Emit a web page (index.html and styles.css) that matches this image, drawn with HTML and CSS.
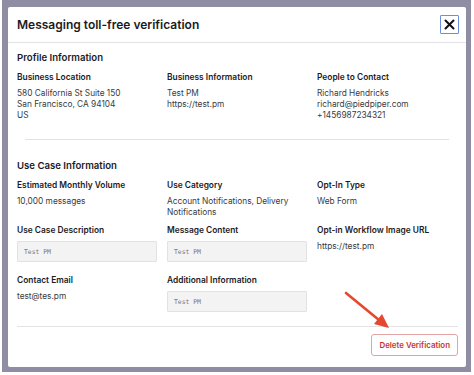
FILE: index.html
```html
<!DOCTYPE html>
<html lang="en">
<head>
  <meta charset="UTF-8" />
  <title>Messaging toll-free verification</title>
  <link rel="stylesheet" href="styles.css">
</head>
<body>
  <div class="overlay">
    <div class="modal">
      <div class="modal-header">
        <h1>Messaging toll-free verification</h1>
        <button class="close-btn" aria-label="Close">
          <svg width="11" height="11" viewBox="0 0 11 11"><path d="M1.5 1.5 L9.5 9.5 M9.5 1.5 L1.5 9.5" stroke="#111" stroke-width="2" stroke-linecap="round"/></svg>
        </button>
      </div>

      <div class="modal-body">
        <h2>Profile Information</h2>
        <div class="grid">
          <div class="field">
            <h3>Business Location</h3>
            <p>580 California St Suite 150<br>San Francisco, CA 94104<br>US</p>
          </div>
          <div class="field">
            <h3>Business Information</h3>
            <p>Test PM<br>https://test.pm</p>
          </div>
          <div class="field">
            <h3>People to Contact</h3>
            <p>Richard Hendricks<br>richard@piedpiper.com<br>+1456987234321</p>
          </div>
        </div>

        <hr class="divider inset">

        <h2>Use Case Information</h2>
        <div class="grid">
          <div class="field">
            <h3>Estimated Monthly Volume</h3>
            <p>10,000 messages</p>
          </div>
          <div class="field">
            <h3>Use Category</h3>
            <p>Account Notifications, Delivery<br>Notifications</p>
          </div>
          <div class="field">
            <h3>Opt-In Type</h3>
            <p>Web Form</p>
          </div>

          <div class="field">
            <h3>Use Case Description</h3>
            <div class="box">Test PM</div>
          </div>
          <div class="field">
            <h3>Message Content</h3>
            <div class="box">Test PM</div>
          </div>
          <div class="field">
            <h3>Opt-in Workflow Image URL</h3>
            <p>https://test.pm</p>
          </div>

          <div class="field">
            <h3>Contact Email</h3>
            <p>test@tes.pm</p>
          </div>
          <div class="field">
            <h3>Additional Information</h3>
            <div class="box">Test PM</div>
          </div>
        </div>

        <hr class="divider">

        <div class="actions">
          <button class="delete-btn">Delete Verification</button>
        </div>
      </div>

      <svg class="arrow" width="60" height="50" viewBox="0 0 60 50">
        <line x1="3" y1="3" x2="36" y2="30" stroke="#e5472f" stroke-width="2.6" stroke-linecap="round"/>
        <polygon points="46,38 31,34 39,24" fill="#e5472f"/>
      </svg>
    </div>
  </div>
</body>
</html>
```

FILE: styles.css
```css
* {
  margin: 0;
  padding: 0;
  box-sizing: border-box;
}
html, body {
  width: 100%;
  height: 100%;
  overflow: hidden;
  background: #fff;
  font-family: 'Inter', 'Liberation Sans', sans-serif;
  color: #222;
}
.overlay {
  position: absolute;
  top: 0;
  left: 2px;
  right: 3px;
  bottom: 3px;
  background: #8f8da4;
  padding: 7px 5px 5px 6px;
}
.modal {
  position: relative;
  width: 458px;
  height: 360px;
  background: #fff;
  border-radius: 2px;
}
.modal-header {
  height: 36px;
  display: flex;
  align-items: center;
  justify-content: space-between;
  padding: 0 7px 0 9px;
  border-bottom: 1px solid #e3e3e6;
}
.modal-header h1 {
  font-size: 12px;
  font-weight: 600;
  color: #1b1b1f;
}
.close-btn {
  width: 19px;
  height: 19px;
  display: flex;
  align-items: center;
  justify-content: center;
  background: #fff;
  border: 1.5px solid #6b8fdc;
  border-radius: 1px;
}
.modal-body {
  padding: 9px 8px 11px 9px;
}
h2 {
  font-size: 9.6px;
  font-weight: 600;
  line-height: 12px;
  color: #1b1b1f;
  margin-bottom: 8px;
}
.grid {
  display: grid;
  grid-template-columns: 150px 150px 141px;
  row-gap: 7px;
}
.field h3 {
  font-size: 8.4px;
  font-weight: 600;
  line-height: 11px;
  color: #1b1b1f;
  margin-bottom: 5px;
}
.field p {
  font-size: 8.3px;
  line-height: 11px;
  color: #3a3a40;
}
.box {
  width: 140px;
  height: 21px;
  margin-bottom: 6px;
  display: flex;
  align-items: center;
  padding-left: 6px;
  background: #f3f3f4;
  border: 1px solid #e2e2e4;
  border-radius: 1px;
  font-family: 'DejaVu Sans Mono', 'Liberation Mono', monospace;
  font-size: 6.4px;
  color: #777;
}
.divider {
  border: 0;
  border-top: 1px solid #e3e3e6;
  margin-top: 8px;
}
.divider.inset {
  margin: 18px 9px 20px 8px;
}
.actions {
  display: flex;
  justify-content: flex-end;
  margin-top: 7px;
}
.delete-btn {
  height: 22px;
  padding: 0 7px;
  background: #fff;
  border: 1px solid #e4a3a3;
  border-radius: 3px;
  font-family: 'Inter', 'Liberation Sans', sans-serif;
  font-size: 7.9px;
  font-weight: 600;
  color: #c8352e;
}
.arrow {
  position: absolute;
  left: 335px;
  top: 283px;
}
```
